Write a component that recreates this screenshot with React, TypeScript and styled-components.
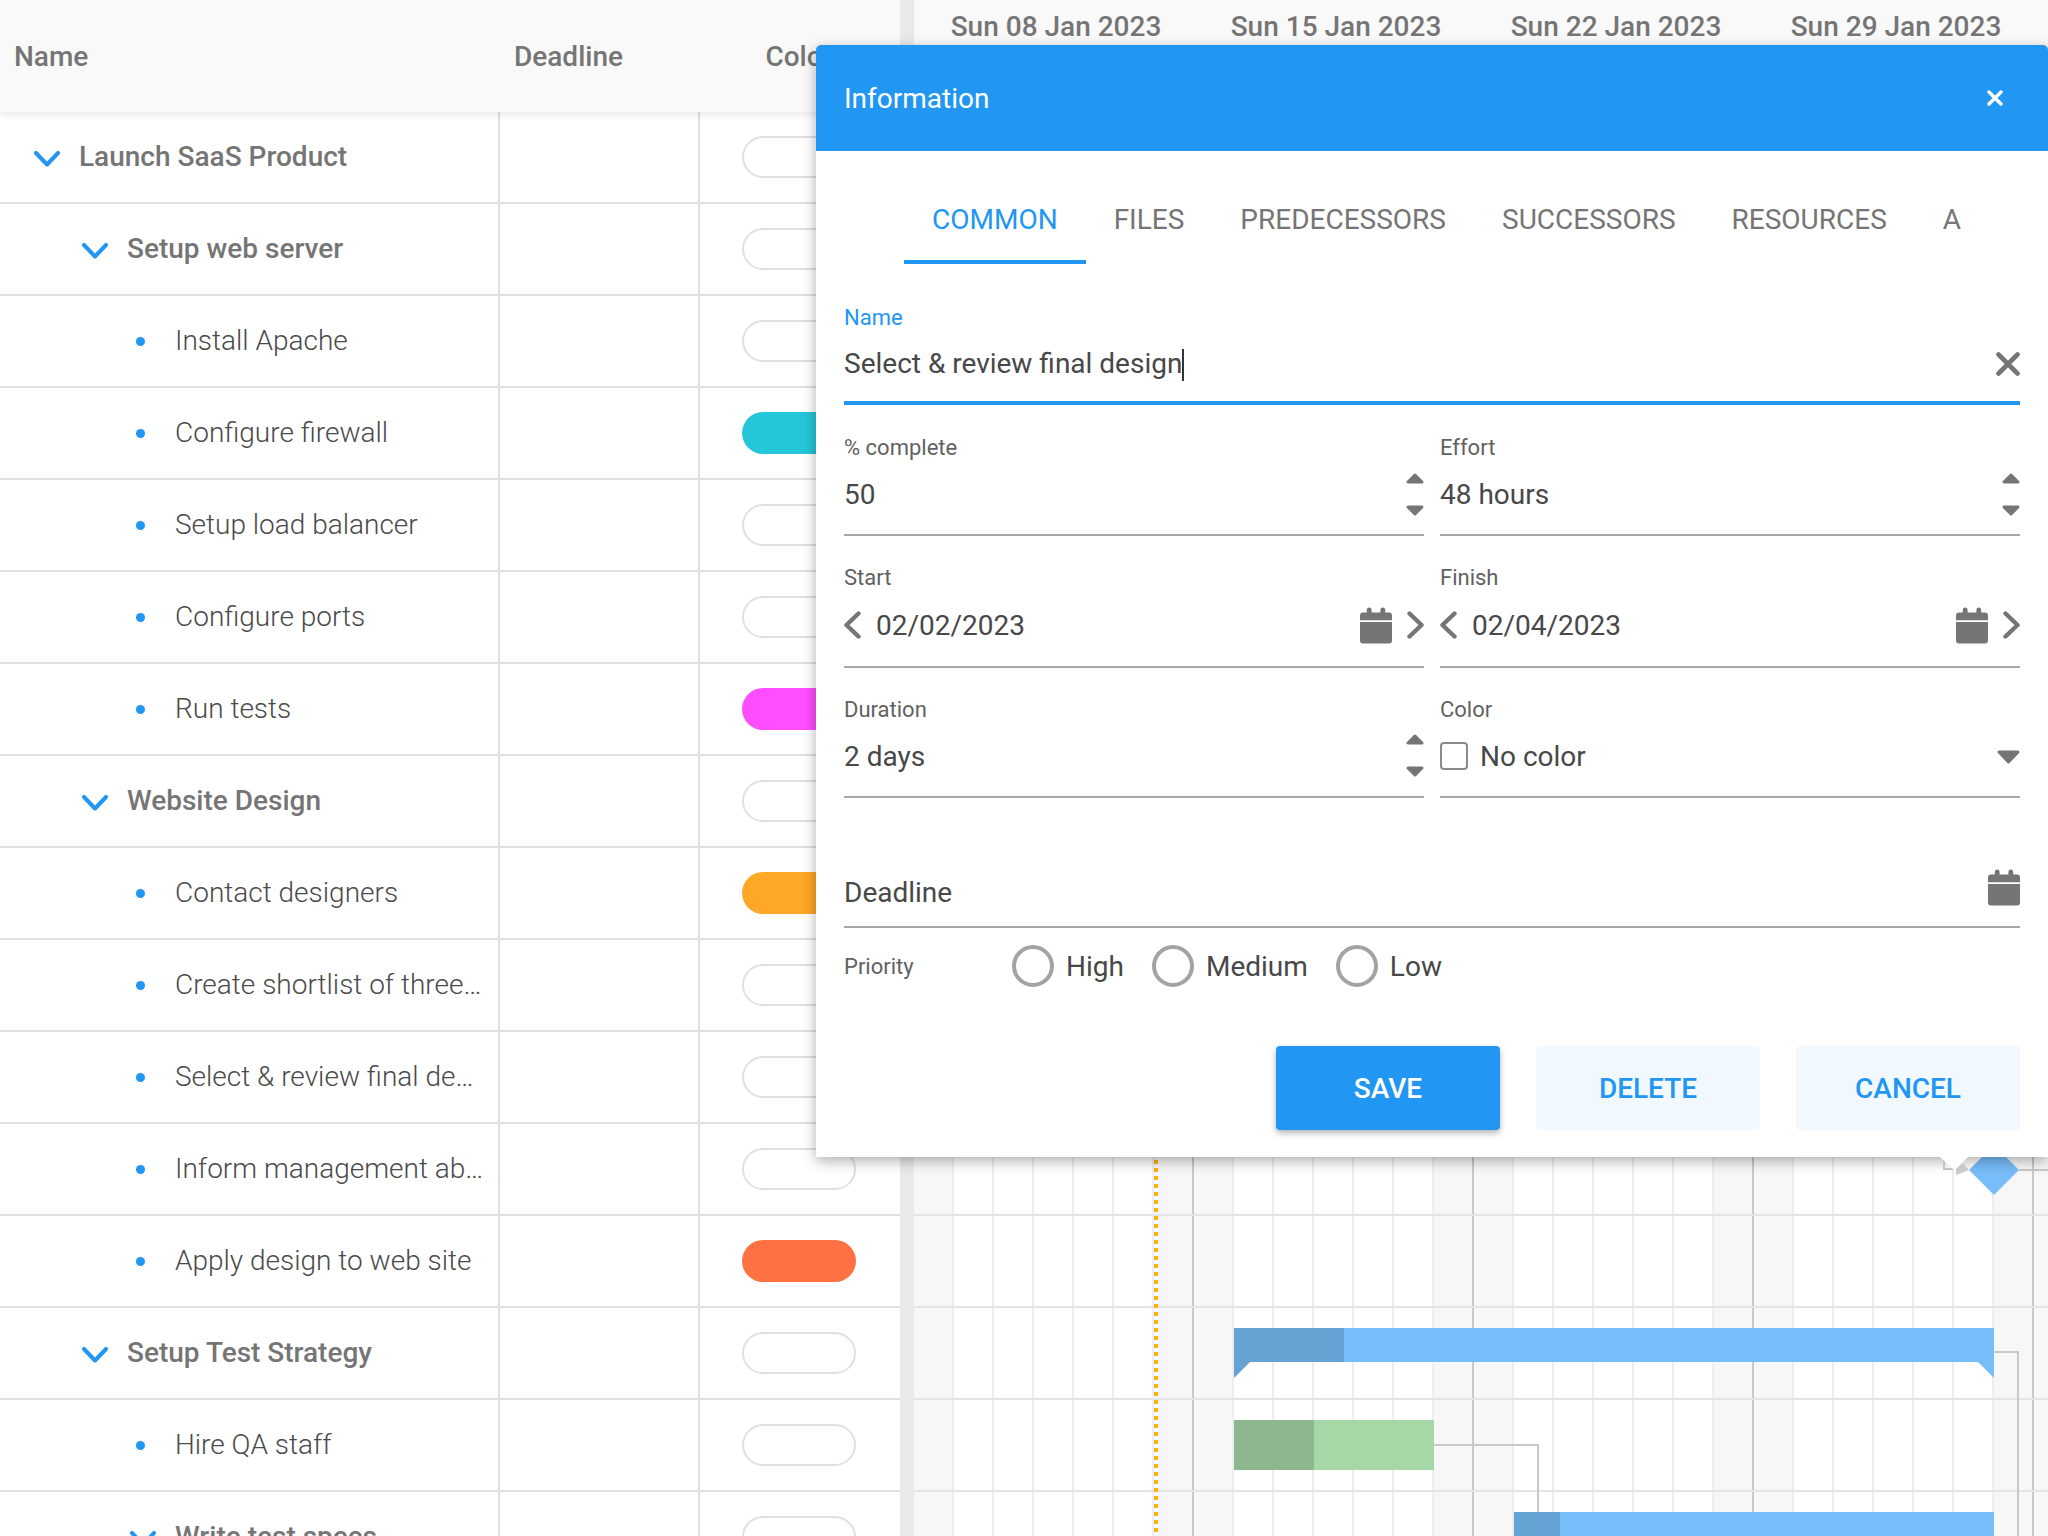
import React from "react";
import styled, { createGlobalStyle } from "styled-components";

const Global = createGlobalStyle`
  html, body { margin: 0; padding: 0; background: #fff; }
  body { width: 2048px; height: 1536px; overflow: hidden; font-family: Roboto, "Liberation Sans", sans-serif; }
  * { box-sizing: border-box; }
`;

const Page = styled.div`
  position: relative;
  display: flex;
  width: 2048px;
  height: 1536px;
  overflow: hidden;
  background: #fff;
`;

/* ---------- left grid ---------- */
const Grid = styled.div`
  width: 900px;
  flex: none;
  display: flex;
  flex-direction: column;
  overflow: hidden;
`;
const GridHead = styled.div`
  position: relative;
  z-index: 1;
  display: grid;
  grid-template-columns: 500px 200px 200px;
  height: 112px;
  flex: none;
  background: #f9f9f9;
  box-shadow: 0 2px 8px rgba(0, 0, 0, 0.1);
`;
const HeadCell = styled.div<{ $center?: boolean }>`
  display: flex;
  align-items: center;
  justify-content: ${(p) => (p.$center ? "center" : "flex-start")};
  padding: 0 ${(p) => (p.$center ? 16 : 14)}px 0 14px;
  font-size: 28px;
  font-weight: 500;
  color: #757575;
`;
const RowWrap = styled.div`
  display: grid;
  grid-template-columns: 500px 200px 200px;
  height: 92px;
  flex: none;
  border-bottom: 2px solid #e0e0e0;
`;
const NameCell = styled.div<{ $level: number }>`
  display: flex;
  align-items: center;
  min-width: 0;
  padding: 0 14px 0 ${(p) => 34 + p.$level * 48}px;
  border-right: 2px solid #e0e0e0;
`;
const Marker = styled.div`
  width: 26px;
  flex: none;
  margin-right: 19px;
  display: flex;
  justify-content: center;
  align-items: center;
`;
const Bullet = styled.span`
  width: 9px;
  height: 9px;
  margin-right: 5px;
  border-radius: 50%;
  background: #2196f3;
`;
const TaskName = styled.span<{ $parent?: boolean }>`
  flex: 1;
  min-width: 0;
  white-space: nowrap;
  overflow: hidden;
  text-overflow: ellipsis;
  font-size: 28px;
  margin-top: -1px;
  font-weight: ${(p) => (p.$parent ? 500 : 300)};
  color: ${(p) => (p.$parent ? "#757575" : "#4a4a4a")};
`;
const DeadlineCell = styled.div`
  border-right: 2px solid #e0e0e0;
`;
const ColorCell = styled.div`
  display: flex;
  align-items: center;
  padding-left: 42px;
`;
const Pill = styled.div<{ $color?: string }>`
  width: 114px;
  height: 42px;
  border-radius: 21px;
  background: ${(p) => p.$color ?? "#fff"};
  border: ${(p) => (p.$color ? "none" : "2px solid #e0e0e0")};
`;
const Splitter = styled.div`
  width: 14px;
  flex: none;
  background: #e9e9e9;
`;

/* ---------- gantt ---------- */
const Gantt = styled.div`
  flex: 1;
  min-width: 0;
  display: flex;
  flex-direction: column;
  overflow: hidden;
`;
const GanttHead = styled.div`
  display: flex;
  height: 112px;
  flex: none;
  background: #f9f9f9;
`;
const Week = styled.div`
  width: 280px;
  flex: none;
  padding: 11px 0 0 4px;
  text-align: center;
  font-size: 28px;
  line-height: 32px;
  font-weight: 500;
  color: #757575;
  white-space: nowrap;
`;
const Chart = styled.svg`
  display: block;
  width: 1134px;
  height: 1424px;
  flex: none;
`;

/* ---------- dialog ---------- */
const Dialog = styled.div`
  position: absolute;
  left: 816px;
  top: 45px;
  width: 1232px;
  height: 1112px;
  background: #fff;
  border-radius: 5px 5px 0 0;
  box-shadow: 0 4px 14px rgba(0, 0, 0, 0.32);
  z-index: 2;
  display: flex;
  flex-direction: column;
`;
const DialogHead = styled.div`
  height: 106px;
  flex: none;
  display: flex;
  align-items: center;
  justify-content: space-between;
  padding: 0 45px 0 28px;
  background: #2196f3;
  border-radius: 5px 5px 0 0;
  color: #fff;
  font-size: 28px;
`;
const Tabs = styled.div`
  display: flex;
  margin-top: 25px;
  padding-left: 88px;
  height: 88px;
  flex: none;
`;
const Tab = styled.div<{ $active?: boolean }>`
  display: flex;
  align-items: center;
  padding: 2px 28px 0;
  font-size: 28px;
  color: ${(p) => (p.$active ? "#2196f3" : "#757575")};
  border-bottom: 4px solid ${(p) => (p.$active ? "#2196f3" : "transparent")};
`;
const Body = styled.div`
  padding: 0 28px;
  flex: 1;
  display: flex;
  flex-direction: column;
`;
const FieldRow = styled.div<{ $top: number }>`
  display: grid;
  grid-template-columns: 580px 580px;
  column-gap: 16px;
  margin-top: ${(p) => p.$top}px;
`;
const Field = styled.div<{ $top?: number }>`
  margin-top: ${(p) => p.$top ?? 0}px;
  min-width: 0;
`;
const Label = styled.div<{ $focus?: boolean }>`
  height: 30px;
  line-height: 30px;
  font-size: 22px;
  color: ${(p) => (p.$focus ? "#2196f3" : "#616161")};
`;
const Value = styled.div<{ $h?: number; $pad?: number; $line?: string; $lw?: number }>`
  display: flex;
  align-items: center;
  height: ${(p) => (p.$h ?? 62) + (p.$pad ?? 9) + (p.$lw ?? 2)}px;
  padding-bottom: ${(p) => p.$pad ?? 9}px;
  border-bottom: ${(p) => p.$lw ?? 2}px solid ${(p) => p.$line ?? "#a8a8a8"};
`;
const ValueText = styled.div`
  flex: 1;
  min-width: 0;
  font-size: 28px;
  color: #484848;
  white-space: nowrap;
`;
const Caret = styled.span`
  display: inline-block;
  width: 2px;
  height: 32px;
  background: #333;
  vertical-align: middle;
  margin-top: -3px;
`;
const Spin = styled.div<{ $lift?: number }>`
  width: 18px;
  flex: none;
  display: flex;
  flex-direction: column;
  gap: 21px;
  margin-bottom: ${(p) => p.$lift ?? 0}px;
`;
const IconSlot = styled.div<{ $lift?: number; $gap?: number }>`
  display: flex;
  flex: none;
  margin-bottom: ${(p) => p.$lift ?? 0}px;
  margin-right: ${(p) => p.$gap ?? 0}px;
`;
const DateText = styled(ValueText)`
  margin: 1px 15px 0;
`;
const CheckBox = styled.span`
  width: 28px;
  height: 28px;
  flex: none;
  margin-right: 12px;
  border: 2px solid #8a8a8a;
  border-radius: 4px;
  background: #fff;
`;
const PriorityRow = styled.div`
  display: flex;
  align-items: center;
  height: 42px;
  margin-top: 17px;
`;
const PriorityLabel = styled.div`
  width: 168px;
  flex: none;
  font-size: 22px;
  color: #616161;
`;
const RadioItem = styled.div`
  display: flex;
  align-items: center;
  margin-right: 28px;
  font-size: 28px;
  color: #484848;
`;
const Ring = styled.span`
  width: 42px;
  height: 42px;
  margin-right: 12px;
  border: 4px solid #a3a3a3;
  border-radius: 50%;
`;
const Buttons = styled.div`
  display: flex;
  justify-content: flex-end;
  gap: 36px;
  margin-top: 59px;
`;
const Button = styled.div<{ $primary?: boolean }>`
  width: 224px;
  height: 84px;
  display: flex;
  align-items: center;
  justify-content: center;
  border-radius: 4px;
  font-size: 28px;
  font-weight: 500;
  color: ${(p) => (p.$primary ? "#fff" : "#2196f3")};
  background: ${(p) => (p.$primary ? "#2196f3" : "#f2f9fe")};
  box-shadow: ${(p) => (p.$primary ? "0 3px 6px rgba(0,0,0,.3)" : "none")};
`;
const Anchor = styled.svg`
  position: absolute;
  left: 1124px;
  top: 1112px;
  width: 40px;
  height: 24px;
`;

/* ---------- icons ---------- */
const Expander = () => (
  <svg width="26" height="16" viewBox="0 0 26 16" fill="none" style={{ marginTop: 4 }}>
    <path d="M2 2 L13 13.5 L24 2" stroke="#2196f3" strokeWidth="4" strokeLinecap="round" strokeLinejoin="round" />
  </svg>
);
const Close = () => (
  <svg width="16" height="16" viewBox="0 0 16 16" fill="none">
    <path d="M2 2 L14 14 M14 2 L2 14" stroke="#fff" strokeWidth="3.4" strokeLinecap="round" />
  </svg>
);
const Clear = () => (
  <svg width="24" height="24" viewBox="0 0 24 24" fill="none">
    <path d="M2.5 2.5 L21.5 21.5 M21.5 2.5 L2.5 21.5" stroke="#757575" strokeWidth="4.6" strokeLinecap="round" />
  </svg>
);
const SpinIcon = ({ down }: { down?: boolean }) => (
  <svg width="18" height="11" viewBox="0 0 18 11" style={{ display: "block" }}>
    <path
      d={down ? "M2 2 H16 L9 9 Z" : "M2 9 H16 L9 2 Z"}
      fill="#757575"
      stroke="#757575"
      strokeWidth="3"
      strokeLinejoin="round"
    />
  </svg>
);
const Spinner = ({ lift }: { lift?: number }) => (
  <Spin $lift={lift}>
    <SpinIcon />
    <SpinIcon down />
  </Spin>
);
const Arrow = ({ right }: { right?: boolean }) => (
  <svg width="17" height="28" viewBox="0 0 17 28" fill="none" style={{ flex: "none" }}>
    <path
      d={right ? "M2.5 2.5 L14.5 14 L2.5 25.5" : "M14.5 2.5 L2.5 14 L14.5 25.5"}
      stroke="#757575"
      strokeWidth="4.4"
      strokeLinecap="round"
      strokeLinejoin="round"
    />
  </svg>
);
const Calendar = () => (
  <svg width="32" height="37" viewBox="0 0 33 37">
    <g fill="#757575">
      <rect x="7" y="0" width="5" height="9" rx="2.5" />
      <rect x="21" y="0" width="5" height="9" rx="2.5" />
      <path d="M3 5 H30 A3 3 0 0 1 33 8 V13 H0 V8 A3 3 0 0 1 3 5 Z" />
      <path d="M0 15 H33 V34 A3 3 0 0 1 30 37 H3 A3 3 0 0 1 0 34 Z" />
    </g>
  </svg>
);
const DropCaret = () => (
  <svg width="23" height="14" viewBox="0 0 23 14" style={{ marginTop: 2 }}>
    <path d="M2 2 H21 L11.5 12 Z" fill="#757575" stroke="#757575" strokeWidth="3" strokeLinejoin="round" />
  </svg>
);

/* ---------- data ---------- */
type Task = { name: string; level: number; parent?: boolean; color?: string };
const tasks: Task[] = [
  { name: "Launch SaaS Product", level: 0, parent: true },
  { name: "Setup web server", level: 1, parent: true },
  { name: "Install Apache", level: 2 },
  { name: "Configure firewall", level: 2, color: "#26c6da" },
  { name: "Setup load balancer", level: 2 },
  { name: "Configure ports", level: 2 },
  { name: "Run tests", level: 2, color: "#ff4dff" },
  { name: "Website Design", level: 1, parent: true },
  { name: "Contact designers", level: 2, color: "#ffa726" },
  { name: "Create shortlist of three concepts", level: 2 },
  { name: "Select & review final design", level: 2 },
  { name: "Inform management about decision", level: 2 },
  { name: "Apply design to web site", level: 2, color: "#ff7043" },
  { name: "Setup Test Strategy", level: 1, parent: true },
  { name: "Hire QA staff", level: 2 },
  { name: "Write test specs", level: 2, parent: true },
];
const weeks = ["Sun 08 Jan 2023", "Sun 15 Jan 2023", "Sun 22 Jan 2023", "Sun 29 Jan 2023"];
const tabs = ["COMMON", "FILES", "PREDECESSORS", "SUCCESSORS", "RESOURCES", "A"];

const days = Array.from({ length: 29 }, (_, i) => i);
const rowLines = Array.from({ length: 16 }, (_, i) => 202 + i * 92);

const GanttChart = () => (
  <Chart viewBox="914 112 1134 1424">
    {days
      .filter((i) => i % 7 === 0 || i % 7 === 6)
      .map((i) => (
        <rect key={i} x={914 + i * 40} y={112} width={40} height={1424} fill="#f7f7f7" />
      ))}
    {days.map((i) => (
      <rect
        key={i}
        x={912 + (i + 1) * 40}
        y={112}
        width={2}
        height={1424}
        fill={(i + 1) % 7 === 0 ? "#c8c8c8" : "#eeeeee"}
      />
    ))}
    {rowLines.map((y) => (
      <rect key={y} x={914} y={y} width={1134} height={2} fill="#e4e4e4" />
    ))}
    <line x1={1156} y1={1160} x2={1156} y2={1536} stroke="#fdb011" strokeWidth={4} strokeDasharray="4 4" />
    <g fill="none" stroke="#c8c8c8" strokeWidth={2}>
      <path d="M2019 1170 H2048" />
      <path d="M1994 1352 H2018 V1536" />
      <path d="M1434 1445 H1538 V1512" />
    </g>
    <path d="M1994 1145 L2019 1170 L1994 1195 L1969 1170 Z" fill="#77bdf9" />
    <rect x={1234} y={1328} width={760} height={34} fill="#77bdf9" />
    <path d="M1978 1362 H1994 V1378 Z" fill="#77bdf9" />
    <rect x={1234} y={1328} width={110} height={34} fill="#65a3d5" />
    <path d="M1234 1362 H1250 L1234 1378 Z" fill="#65a3d5" />
    <rect x={1234} y={1420} width={200} height={50} fill="#a5d7a7" />
    <rect x={1234} y={1420} width={80} height={50} fill="#8db78f" />
    <rect x={1514} y={1512} width={480} height={50} fill="#77bdf9" />
    <rect x={1514} y={1512} width={46} height={50} fill="#65a3d5" />
  </Chart>
);

export default function App() {
  return (
    <Page>
      <Global />
      <Grid>
        <GridHead>
          <HeadCell>Name</HeadCell>
          <HeadCell>Deadline</HeadCell>
          <HeadCell $center>Color</HeadCell>
        </GridHead>
        {tasks.map((t) => (
          <RowWrap key={t.name}>
            <NameCell $level={t.level}>
              <Marker>{t.parent ? <Expander /> : <Bullet />}</Marker>
              <TaskName $parent={t.parent}>{t.name}</TaskName>
            </NameCell>
            <DeadlineCell />
            <ColorCell>
              <Pill $color={t.color} />
            </ColorCell>
          </RowWrap>
        ))}
      </Grid>
      <Splitter />
      <Gantt>
        <GanttHead>
          {weeks.map((w) => (
            <Week key={w}>{w}</Week>
          ))}
        </GanttHead>
        <GanttChart />
      </Gantt>
      <Dialog>
        <DialogHead>
          <span>Information</span>
          <Close />
        </DialogHead>
        <Tabs>
          {tabs.map((t, i) => (
            <Tab key={t} $active={i === 0}>
              {t}
            </Tab>
          ))}
        </Tabs>
        <Body>
          <Field $top={39}>
            <Label $focus>Name</Label>
            <Value $pad={6} $lw={4} $line="#2196f3">
              <ValueText>
                Select &amp; review final design
                <Caret />
              </ValueText>
              <Clear />
            </Value>
          </Field>
          <FieldRow $top={28}>
            <Field>
              <Label>% complete</Label>
              <Value>
                <ValueText>50</ValueText>
                <Spinner />
              </Value>
            </Field>
            <Field>
              <Label>Effort</Label>
              <Value>
                <ValueText>48 hours</ValueText>
                <Spinner />
              </Value>
            </Field>
          </FieldRow>
          <FieldRow $top={27}>
            <Field>
              <Label>Start</Label>
              <Value $h={64}>
                <Arrow />
                <DateText>02/02/2023</DateText>
                <IconSlot $gap={15}>
                  <Calendar />
                </IconSlot>
                <Arrow right />
              </Value>
            </Field>
            <Field>
              <Label>Finish</Label>
              <Value $h={64}>
                <Arrow />
                <DateText>02/04/2023</DateText>
                <IconSlot $gap={15}>
                  <Calendar />
                </IconSlot>
                <Arrow right />
              </Value>
            </Field>
          </FieldRow>
          <FieldRow $top={27}>
            <Field>
              <Label>Duration</Label>
              <Value>
                <ValueText>2 days</ValueText>
                <Spinner lift={2} />
              </Value>
            </Field>
            <Field>
              <Label>Color</Label>
              <Value>
                <CheckBox />
                <ValueText>No color</ValueText>
                <DropCaret />
              </Value>
            </Field>
          </FieldRow>
          <Field $top={63}>
            <Value $pad={3}>
              <ValueText>Deadline</ValueText>
              <IconSlot $lift={10}>
                <Calendar />
              </IconSlot>
            </Value>
          </Field>
          <PriorityRow>
            <PriorityLabel>Priority</PriorityLabel>
            <RadioItem>
              <Ring />
              High
            </RadioItem>
            <RadioItem>
              <Ring />
              Medium
            </RadioItem>
            <RadioItem>
              <Ring />
              Low
            </RadioItem>
          </PriorityRow>
          <Buttons>
            <Button $primary>SAVE</Button>
            <Button>DELETE</Button>
            <Button>CANCEL</Button>
          </Buttons>
        </Body>
        <Anchor viewBox="0 0 40 24">
          <path d="M4 0 V12 H14" fill="none" stroke="#c4c4c4" strokeWidth="2" />
          <path d="M16 18 L29 13 L23 6 L16 12 Z" fill="#c9c9c9" />
          <path d="M0 0 H28 L14 13 Z" fill="#fff" />
        </Anchor>
      </Dialog>
    </Page>
  );
}
